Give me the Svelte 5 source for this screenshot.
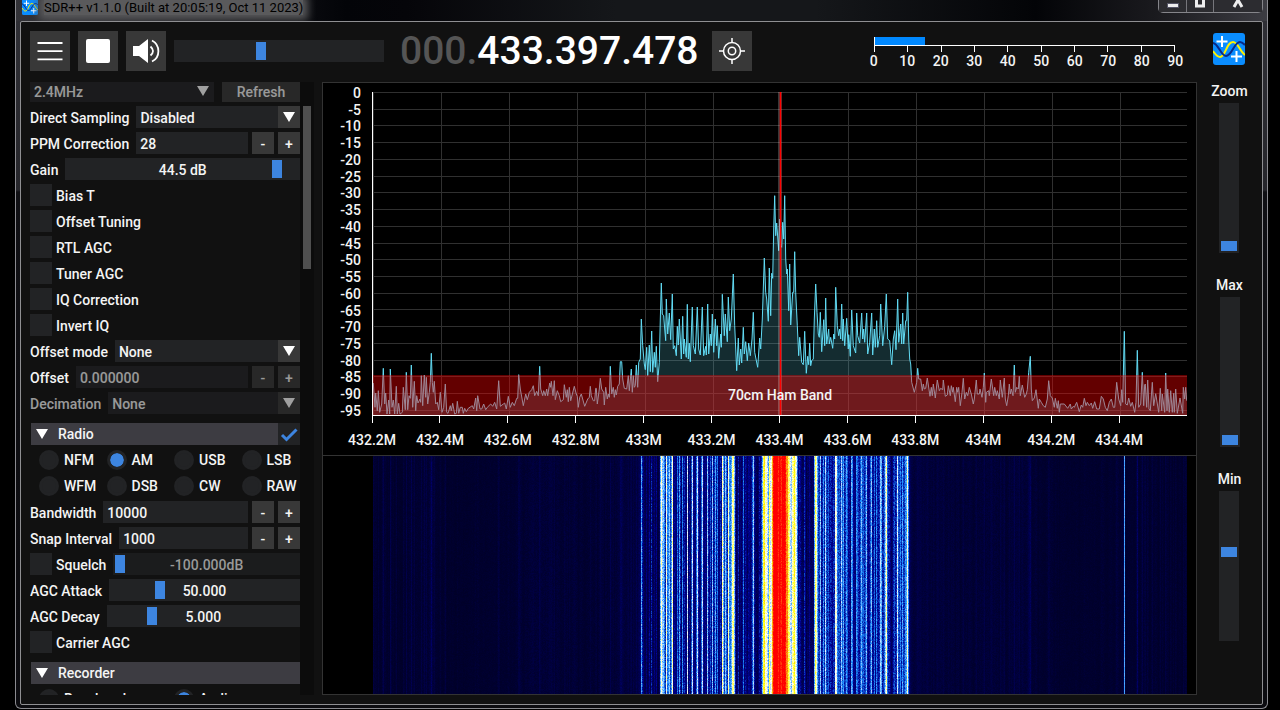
<script>
  import { onMount } from 'svelte';

  // Trace samples as "x,y" pairs in thirds of a plot pixel, one string per segment with its own origin.
  const segments = [
    { ox: -53, oy: -13, d: '160,912;165,985;167,942;172,995;175,935;179,1000;185,975;190,868;194,975;197,942;201,1005;206,963;209,1005;211,870;216,985;220,963;224,1005;229,922;232,1005;236,973;240,1005;247,1000;250,925;256,992;259,880;263,992;267,950;271,958;274,858;278,985;283,907;287,995;290,950;294,972;300,960;302,970;304,890;308,980;313,888;317,955;319,895;323,975;328,940;331,910;334,823;337,910;340,940;343,907;347,975;352,970;356,992;361,940;366,1000;371,985;376,915;380,1000;384,1003;391,980;394,995;398,973;404,1005;409,1003;412,967;416,1003;421,985;427,985;430,1003;434,988;439,998;445,988;457,980;461,990;467,957;470,995;473,950;480,990;485,990;491,975;497,992;502,985;512,975;518,982;524,970;530,990;536,905;541,982;550,975;554,972;559,990;565,952;571,985;577,970;583,980;590,958;593,958;596,887;601,930;610,980;617,945;622,962;628,940;635,932;640,920;644,950;650,937;655,950;659,862;662,930;668,950;671,935;676,950;680,930;683,950;689,912;692,925;694,907;699,950;703,905;706,962;712,935;718,950;722,968;730,962;733,917;739,955;742,932;745,968;748,925;752,965;763,922;769,945;772,952;775,985;779,955;784,945;794,982;803,960;808,955;811,922;814,950;820,965;824,965;827,928;829,928;832,975;838,930;841,898;845,930;851,940;853,978;857,925;862,960;865,945;868,955;871,862;875,945;880,925;883,955;886,932;889,948;893,922;898,915;901,848;905,848;908,900;913,928;920,930;925,890;928,935;934,870;937,940;940,890;943,925;946,920;949,858;953,925;956,850;961,840' },
    { ox: 257, oy: 147, d: '34,240;38,320;43,375;46,392;50,325;53,410;58,318;61,398;65,276;68,400;73,340;76,385;79,322;83,428;88,370;91,240;94,132;97,225;101,230;104,270;107,305;109,180;113,285;118,222;122,302;127,165;130,330;134,320;139,350;142,262;145,318;148,240;154,360;158,232;161,345;163,300;169,355;172,196;175,360;178,312;181,368;187,204;190,320;196,345;202,204;206,330;211,348;217,204;221,350;227,322;229,348;233,195;236,345;241,285;244,320;247,225;251,340;256,240;260,320;262,260;266,358;272,285;274,325;277,166;283,290;286,225;292,308;295,174;299,275;304,240;310,105;314,260;320,395;325,297;328,378;332,330;335,372;340,265;343,345;347,308;352,365;356,312;361,350;366,300;370,220;374,340;378,360;383,385;389,297;392,330;397,240' },
    { ox: 357, oy: -13, d: '103,537;107,640;110,660;115,727;118,567;122,710;125,583;128,598;131,450;134,350;137,470;140,432;146,515;149,420;152,500;155,505;158,430;161,480;164,350;167,540;170,585;172,570;176,695;179,555;182,738;188,640;191,640;194,518;197,640;202,740;206,830;209,775;215,850;220,857;224,757;229,883;233,832;236,857;239,792;242,860;245,845;250,840;253,720;257,615;261,700;265,765;268,775;271,700;275,818;281,722;284,800;287,657;290,795;296,750;298,795;302,775;308,808;311,765;314,780' },
    { ox: 257, oy: 147, d: '617,145;622,260;626,290;629,270;632,300;635,195;638,305;640,240;644,320;650,238;655,330;656,287;661,352;665,213;670,320;677,342;680,222;683,290;689,312;695,222;698,300;701,270;704,310;710,222;713,345;719,310;725,222;728,348;733,270;736,325;740,245;743,325;749,290;752,195;758,320;764,262;769,165;773,300;779,305;785,377;790,300;794,275;798,332;803,180;806,310;812,255;815,315;818,222;821,315;827,245;830,245;833,160;836,300;839,360;842,375;845,430;853,460;860,430;863,388;866,420' },
    { ox: 527, oy: 207, d: '62,240;67,275;70,255;73,270;77,268;82,237;90,292;94,265;97,290;100,255;106,297;112,243;118,275;122,268;128,272;130,243;136,292;142,288;145,260;151,290;154,260;158,280;160,265;166,308;170,265;173,280;176,265;181,320;186,280;190,238;194,300;199,280;203,290;208,265;214,285;220,315;223,300;229,243;232,285;238,285;240,270;246,295;250,265;253,222;257,310;259,280;266,275;268,290;274,240;281,290;284,265;289,290;292,275;298,300;301,243;307,295;313,237;316,300;320,320;325,290;328,255;331,285;334,270;339,290;343,198;346,280;350,265;355,270;358,232;361,290;367,258;374,295;379,285;382,272;386,220;391,172;394,270;397,305;403,297;408,272;415,328;418,300;424,310;430,320;436,325;442,300;446,245;451,290;457,297;463,325;466,298;472,328;475,305;478,340;481,315;493,315;503,328;511,315;514,330;520,322;523,325;530,310;538,338;544,318;548,325;553,298;558,320;562,310;568,320;574,312;578,328;584,308;590,330;598,330;604,292;610,300;616,325;622,335;628,310;634,300;640,325;644,325;650,250;656,300;662,320;665,272;668,310;673,97;677,315;682,318;686,297;692,322;697,310;704,340;708,310;712,154;716,325;722,315;727,220;731,320;734,258;736,255;740,325;743,243;747,330;751,335;757,250;761,320;767,284;776,340;781,268;785,335;787,285;794,340;797,222;801,335;803,270;808,340;812,275;817,340;821,283;823,340;827,270;832,343;840,297;848,343;850,265;854,300;857,265;860,305' }
  ];

  const W = 814;
  const H = 323;
  const WF_H = 238;
  const pxPerDb = 3.345;

  const points = segments.flatMap(({ ox, oy, d }) =>
    d.split(';').map((pair) => {
      const [x, y] = pair.split(',').map(Number);
      return [ox + x / 3, Math.min(H - 1, oy + y / 3)];
    })
  );
  const line = points.map(([x, y]) => `${x.toFixed(1)},${y.toFixed(1)}`).join(' ');
  const area = `0,${H} ${line} ${W},${H}`;

  const dbLabels = Array.from({ length: 20 }, (_, i) => -5 * i);
  const freqLabels = ['432.2M', '432.4M', '432.6M', '432.8M', '433M', '433.2M', '433.4M', '433.6M', '433.8M', '434M', '434.2M', '434.4M'];
  const meterLabels = [0, 10, 20, 30, 40, 50, 60, 70, 80, 90];
  const checks = ['Bias T', 'Offset Tuning', 'RTL AGC', 'Tuner AGC', 'IQ Correction', 'Invert IQ'];
  const modes = ['NFM', 'AM', 'USB', 'LSB', 'WFM', 'DSB', 'CW', 'RAW'];
  const levels = [
    { name: 'Zoom', value: 0 },
    { name: 'Max', value: 0 },
    { name: 'Min', value: 60 }
  ];

  const palette = [
    [0, 0, 32], [0, 0, 48], [0, 0, 80], [0, 0, 145], [30, 144, 255], [255, 255, 255],
    [255, 255, 0], [254, 109, 22], [255, 0, 0]
  ];

  let waterfall = $state();
  let mode = $state('AM');

  function colour(db) {
    const t = Math.max(0, Math.min(7.999, (db + 102) / 8.6));
    const i = Math.floor(t);
    const f = t - i;
    return palette[i].map((c, k) => c + (palette[i + 1][k] - c) * f);
  }

  function levelAt(x) {
    let i = points.findIndex((p) => p[0] >= x);
    if (i < 0) i = points.length - 1;
    if (i === 0) return -points[0][1] / pxPerDb;
    const [x0, y0] = points[i - 1];
    const [x1, y1] = points[i];
    return -(y0 + ((y1 - y0) * (x - x0)) / (x1 - x0 || 1)) / pxPerDb;
  }

  onMount(() => {
    const ctx = waterfall.getContext('2d');
    const image = ctx.createImageData(W, WF_H);
    let seed = 7;
    const random = () => ((seed = (seed * 1664525 + 1013904223) >>> 0) / 4294967296);
    for (let x = 0; x < W; x++) {
      let base = levelAt(x + 0.4);
      const busy = x > 266 && x < 537;
      const carrier = x === 751;
      if (carrier) base = -66;
      else if (!busy) base = -97 + (base + 97) * 0.75;
      else if (x > 398 && x < 416) base += 10;
      else if (base < -58) base += (base + 73) * 0.4;
      const spread = busy ? 6 : 4;
      for (let y = 0; y < WF_H; y++) {
        const [r, g, b] = colour(base + (random() - 0.5) * (carrier ? 2 : spread));
        image.data.set([r, g, b, 255], (y * W + x) * 4);
      }
    }
    ctx.putImageData(image, 0, 0);
  });
</script>

{#snippet logo(size)}
  <svg class="logo" width={size} height={size} viewBox="0 0 32 32" aria-hidden="true">
    <rect width="32" height="32" rx="3" fill="#0a8dff" />
    <path d="M0 18C3 22 4 24 7 24C13 24 13 9 20 9C25 9 27 19 32 22" fill="none" stroke="#fff200" stroke-width="2" />
    <path d="M0 10C5 10 8 23 13 23C19 23 21 9 27 9C29 9 31 11 32 12" fill="none" stroke="#0a2a86" stroke-width="2" />
    <path d="M9 3v11M3.500 8.500h11M23.500 18v11M18 23.500h11" stroke="#fff" stroke-width="2" />
  </svg>
{/snippet}

{#snippet combo(id, label, value, disabled)}
  <div class="row" class:dim={disabled}>
    <label for={id}>{label}</label>
    <div class="combo">
      <select {id} {disabled}><option>{value}</option></select>
      <span class="arrow"></span>
    </div>
  </div>
{/snippet}

{#snippet stepper(id, label, value, disabled)}
  <div class="row">
    <label for={id}>{label}</label>
    <div class="stepper" class:dim={disabled}>
      <input {id} type="text" {value} {disabled} size="1" />
      <button {disabled} aria-label="Decrease {label}">-</button>
      <button {disabled} aria-label="Increase {label}">+</button>
    </div>
  </div>
{/snippet}

{#snippet slider(id, value, text, faded)}
  <div class="slider" class:faded>
    <input {id} type="range" min="0" max="1000" {value} />
    <output for={id}>{text}</output>
  </div>
{/snippet}

<div class="window">
  <header class="titlebar">
    <div class="caption">{@render logo(16)}<span>SDR++ v1.1.0 (Built at 20:05:19, Oct 11 2023)</span></div>
    <div class="winbuttons">
      <button aria-label="Minimize"><svg width="12" height="8" viewBox="0 0 12 8"><path d="M.5 3.500h11v4h-11z" fill="#eee" stroke="#556" /></svg></button>
      <button aria-label="Maximize"><svg width="12" height="8" viewBox="0 0 12 8"><path d="M2.500 0v6h7v-6" fill="none" stroke="#eee" stroke-width="3" /></svg></button>
      <button aria-label="Close"><svg width="14" height="8" viewBox="0 0 14 8"><path d="M7 0L3 7M7 0l4 7" stroke="#eee" stroke-width="3" /></svg></button>
    </div>
  </header>

  <main>
    <div class="toolbar">
      <button class="tool" aria-label="Menu">
        <svg width="40" height="40" viewBox="0 0 40 40"><path d="M7.500 12h25M7.500 20.200h25M7.500 28.400h25" stroke="#fff" stroke-width="1.800" /></svg>
      </button>
      <button class="tool" aria-label="Stop">
        <svg width="40" height="40" viewBox="0 0 40 40"><rect x="8" y="8" width="24" height="24" rx="2" fill="#fff" /></svg>
      </button>
      <button class="tool" aria-label="Mute">
        <svg width="40" height="40" viewBox="0 0 40 40">
          <path d="M7 15h6l9-7v24l-9-7H7z" fill="#fff" />
          <path d="M24.500 15.500q5 4.500 0 9M26 9.500c8.500 4.500 8.500 17 0 21" fill="none" stroke="#fff" stroke-width="1.800" />
        </svg>
      </button>
      <input class="volume" type="range" min="0" max="1000" value="408" aria-label="Volume" />
      <div class="frequency"><span>000.</span>433.397.478</div>
      <button class="tool" aria-label="Center tuning">
        <svg width="40" height="40" viewBox="0 0 40 40">
          <g fill="none" stroke="#fff" stroke-width="1.500">
            <circle cx="20" cy="20" r="8.500" /><circle cx="20" cy="20" r="3.700" />
            <path d="M20 7v5M20 28v5M7 20h5M28 20h5" />
          </g>
        </svg>
      </button>
      <div class="meter">
        <div class="level"></div>
        <div class="scale">{#each meterLabels as m}<span></span>{/each}</div>
        <div class="numbers">{#each meterLabels as m}<span>{m}</span>{/each}</div>
      </div>
      {@render logo(32)}
    </div>

    <div class="body">
      <aside>
        <div class="controls">
          <div class="row rate dim">
            <div class="combo">
              <select disabled aria-label="Sample rate"><option>2.4MHz</option></select>
              <span class="arrow plain"></span>
            </div>
            <button disabled>Refresh</button>
          </div>
          {@render combo('direct', 'Direct Sampling', 'Disabled', false)}
          {@render stepper('ppm', 'PPM Correction', '28', false)}
          <div class="row"><label for="gain">Gain</label>{@render slider('gain', 927, '44.5 dB', false)}</div>
          {#each checks as c}
            <label class="row check"><input type="checkbox" />{c}</label>
          {/each}
          {@render combo('offmode', 'Offset mode', 'None', false)}
          {@render stepper('offset', 'Offset', '0.000000', true)}
          {@render combo('decim', 'Decimation', 'None', true)}

          <div class="heading">
            <button class="fold"><span></span>Radio</button>
            <label class="enable">
              <input type="checkbox" checked aria-label="Enable Radio" />
              <svg width="22" height="22" viewBox="0 0 22 22"><path d="M4 12l4.500 4.500L18.500 6.500" fill="none" stroke="#3d85e0" stroke-width="3" /></svg>
            </label>
          </div>
          <div class="modes">
            {#each modes as m}
              <label class="radio"><input type="radio" name="mode" value={m} bind:group={mode} />{m}</label>
            {/each}
          </div>
          {@render stepper('bw', 'Bandwidth', '10000', false)}
          {@render stepper('snap', 'Snap Interval', '1000', false)}
          <div class="row">
            <label class="check"><input type="checkbox" />Squelch</label>
            {@render slider('squelch', 0, '-100.000dB', true)}
          </div>
          <div class="row"><label for="attack">AGC Attack</label>{@render slider('attack', 249, '50.000', false)}</div>
          <div class="row"><label for="decay">AGC Decay</label>{@render slider('decay', 212, '5.000', false)}</div>
          <label class="row check"><input type="checkbox" />Carrier AGC</label>

          <div class="heading"><button class="fold"><span></span>Recorder</button></div>
          <div class="modes two">
            <label class="radio"><input type="radio" name="rec" />Baseband</label>
            <label class="radio"><input type="radio" name="rec" checked />Audio</label>
          </div>
        </div>
        <div class="track"><div class="thumb"></div></div>
      </aside>

      <section class="display">
        <div class="spectrum">
          <div class="db">{#each dbLabels as d}<span>{d}</span>{/each}</div>
          <div class="plot">
            <svg viewBox="0 0 {W} {H}" preserveAspectRatio="none" aria-hidden="true">
              <g fill="#303030">
                {#each dbLabels as d}<rect x="0" y={Math.round(-d * pxPerDb)} width={W} height="1" />{/each}
                {#each freqLabels as f, i}<rect x={Math.round(i * 67.9)} y="0" width="1" height={H} />{/each}
              </g>
              <polygon points={area} fill="#5cc8dc" fill-opacity=".22" />
              <polyline points={line} fill="none" stroke="#62dcf5" stroke-width="1" />
              <rect x="0" y="283" width={W} height="40" fill="#f00" fill-opacity=".39" />
              <rect x="405" y="0" width="4" height={H} fill="#fff" fill-opacity=".22" />
              <rect x="406.700" y="0" width="1.600" height={H} fill="#f00" />
            </svg>
            <span class="band">70cm Ham Band</span>
          </div>
          <div class="freq">{#each freqLabels as f}<span>{f}</span>{/each}</div>
        </div>
        <div class="fall"><canvas bind:this={waterfall} width={W} height={WF_H}></canvas></div>
      </section>

      <div class="levels">
        {#each levels as l}
          <label>{l.name}<input type="range" min="0" max="100" value={l.value} /></label>
        {/each}
      </div>
    </div>
  </main>
</div>

<style>
  :global(body) { margin: 0; background: #000; }
  * { box-sizing: border-box; }
  button, input, select, label, output { font: inherit; color: inherit; }
  button { border: 0; padding: 0; border-radius: 0; background: #383838; }
  svg { display: block; }
  .window {
    height: calc(100vh - 1px);
    margin: 0 12px 0 15px;
    padding: 0 4px 3px;
    display: flex;
    flex-direction: column;
    border: 1px solid #8b8b90;
    border-top: 0;
    border-radius: 0 0 6px 6px;
    background: linear-gradient(#303036, #26262b 190px, #101014 192px, #0c0c10);
    font: 500 14px/24px Roboto, sans-serif;
    color: #f4f4f4;
    overflow: hidden;
  }
  .titlebar {
    flex: none;
    height: 21px;
    margin: 0 -4px;
    padding: 0 4px 0 6px;
    display: flex;
    justify-content: space-between;
    background: linear-gradient(90deg, #333338, #030408 330px, #050509 390px, #15171a 600px, #15171a 800px, #030407 1020px, #1a1a1e 1140px, #3c3c42);
  }
  .caption {
    display: flex;
    gap: 6px;
    height: 15px;
    align-items: flex-end;
    font: 400 13px/15px Roboto, sans-serif;
    color: #000;
  }
  .caption span { background: #5a5a5c; box-shadow: 0 0 8px 5px #5a5a5c; height: 15px; white-space: nowrap; }
  .winbuttons {
    display: flex;
    height: 13px;
    border: 1px solid #85858a;
    border-top: 0;
    border-radius: 0 0 5px 5px;
  }
  .winbuttons button { width: 28px; display: flex; justify-content: center; background: #2c2c30; border-right: 1px solid #77777c; }
  .winbuttons button:nth-child(2) { width: 27px; }
  .winbuttons button:last-child { width: 48px; border: 0; }
  main {
    flex: 1;
    min-height: 0;
    display: flex;
    flex-direction: column;
    gap: 11px;
    padding: 9px 0 9px 9px;
    border: 1px solid #8f8f92;
    border-radius: 2px;
    background: #111;
  }
  .toolbar { flex: none; height: 40px; display: flex; gap: 8px; align-items: center; padding-right: 17px; }
  .tool { width: 40px; height: 40px; flex: none; }
  .frequency { margin: 0 5px 0 8px; font-size: 39px; line-height: 40px; color: #fff; white-space: nowrap; }
  .frequency span { color: #555; }
  .toolbar > .logo { flex: none; margin: 0 0 4px 30px; }

  input[type='range'] {
    appearance: none;
    margin: 0;
    padding: 2px;
    background: #222325;
    border-radius: 0;
  }
  input[type='range']::-webkit-slider-thumb {
    appearance: none;
    width: 10px;
    height: 18px;
    border-radius: 0;
    background: #3d85e0;
  }
  .volume { width: 210px; height: 22px; }

  .meter { width: 301px; align-self: flex-start; margin: 6px 0 0 auto; display: flex; flex-direction: column; }
  .level { width: 17%; height: 8px; background: #0088ff; border-left: 1px solid #fff; }
  .scale { display: flex; justify-content: space-between; border-top: 1px solid #fff; }
  .scale span { width: 1px; height: 6px; background: #fff; }
  .numbers { display: grid; grid-template-columns: repeat(10, 1fr); margin: 0 -17px; line-height: 18px; text-align: center; }

  .body { flex: 1; min-height: 0; display: grid; grid-template-columns: 284px 1fr 65px; }
  aside { display: flex; min-height: 0; overflow: hidden; }
  .controls { width: 270px; margin-top: -2px; display: flex; flex-direction: column; gap: 4px; }
  .track { width: 14px; padding: 24px 3px; background: #0c0c0c; }
  .thumb { height: 163px; background: #4f4f4f; }
  .row { flex: none; display: flex; gap: 7px; height: 22px; white-space: nowrap; }
  .combo, .slider { flex: 1; min-width: 0; display: grid; }
  .combo > *, .slider > * { grid-area: 1 / 1; min-width: 0; }
  select { appearance: none; width: 100%; height: 22px; border: 0; border-radius: 0; padding: 0 4px; background: #222325; opacity: 1; }
  .arrow { justify-self: end; width: 22px; height: 22px; background: #383838; display: grid; place-items: center; pointer-events: none; }
  .arrow.plain { background: none; }
  .arrow::after, .fold span { content: ''; width: 12px; height: 10px; background: #fff; clip-path: polygon(0 0, 100% 0, 50% 100%); }
  .dim > * { opacity: .6; }
  .dim .arrow { background: #383838; }
  .dim .arrow.plain { background: none; }
  .rate { gap: 8px; }
  .rate button { width: 78px; }
  .stepper { flex: 1; min-width: 0; display: flex; gap: 4px; }
  .stepper input { flex: 1; min-width: 0; height: 22px; border: 0; padding: 2px 4px 0; background: #222325; }
  .stepper button { width: 22px; }
  .slider input { width: 100%; height: 22px; }
  .slider output { text-align: center; pointer-events: none; }
  .faded input { background: #1b1c1d; }
  .faded output { color: #999; }
  .check { display: flex; gap: 4px; }
  .check input { appearance: none; width: 22px; height: 22px; margin: 0; background: #222325; }
  .heading { flex: none; display: flex; margin: 5px 0 0 1px; }
  .fold { flex: 1; height: 22px; display: flex; align-items: center; gap: 10px; padding-left: 5px; background: #3d3c42; text-align: left; }
  .enable { display: grid; width: 22px; height: 22px; background: #222325; }
  .enable > * { grid-area: 1 / 1; }
  .enable input { appearance: none; margin: 0; }
  .modes { flex: none; display: grid; grid-template-columns: repeat(4, 1fr); gap: 4px 0; }
  .two { grid-template-columns: repeat(2, 1fr); }
  .radio { display: flex; align-items: center; gap: 5px; height: 22px; padding-left: 9px; white-space: nowrap; }
  .radio input { appearance: none; flex: none; width: 20px; height: 20px; margin: 0; border-radius: 50%; background: #222325; border: 3px solid #222325; }
  .radio input:checked { background: #3d85e0; background-clip: padding-box; }

  .display { margin-left: 8px; min-width: 0; display: flex; flex-direction: column; border: 1px solid #333; background: #000; }
  .spectrum {
    flex: 363 1 0;
    min-height: 0;
    display: grid;
    grid-template: 1fr 39px / 49px 1fr;
    padding: 9px 9px 0 0;
    border-bottom: 1px solid #333;
  }
  .db { display: flex; flex-direction: column; justify-content: space-between; margin: -7px 11px -3px 0; text-align: right; line-height: 16px; }
  .plot { min-height: 0; display: grid; border-left: 1px solid #fff; border-bottom: 1px solid #fff; }
  .plot > * { grid-area: 1 / 1; }
  .plot svg { width: 100%; height: 100%; min-height: 0; }
  .band { align-self: end; justify-self: center; height: 31px; line-height: 22px; z-index: 1; }
  .freq { grid-column: 2; display: grid; grid-template-columns: repeat(12, 1fr); margin-left: calc(-100% / 24); width: 100%; text-align: center; line-height: 34px; }
  .freq span::before { content: ''; display: block; width: 1px; height: 7px; margin: 0 auto; background: #fff; }
  .fall { flex: 238 1 0; min-height: 0; padding: 0 9px 0 50px; }
  canvas { display: block; width: 100%; height: 100%; image-rendering: pixelated; }

  .levels { display: flex; flex-direction: column; gap: 23px; align-items: center; padding-top: 1px; }
  .levels label { display: flex; flex-direction: column; align-items: center; gap: 4px; line-height: 16px; padding-bottom: 1px; }
  .levels input { writing-mode: vertical-lr; direction: rtl; width: 20px; height: 150px; }
  .levels input::-webkit-slider-thumb { width: 16px; height: 10px; }
</style>
